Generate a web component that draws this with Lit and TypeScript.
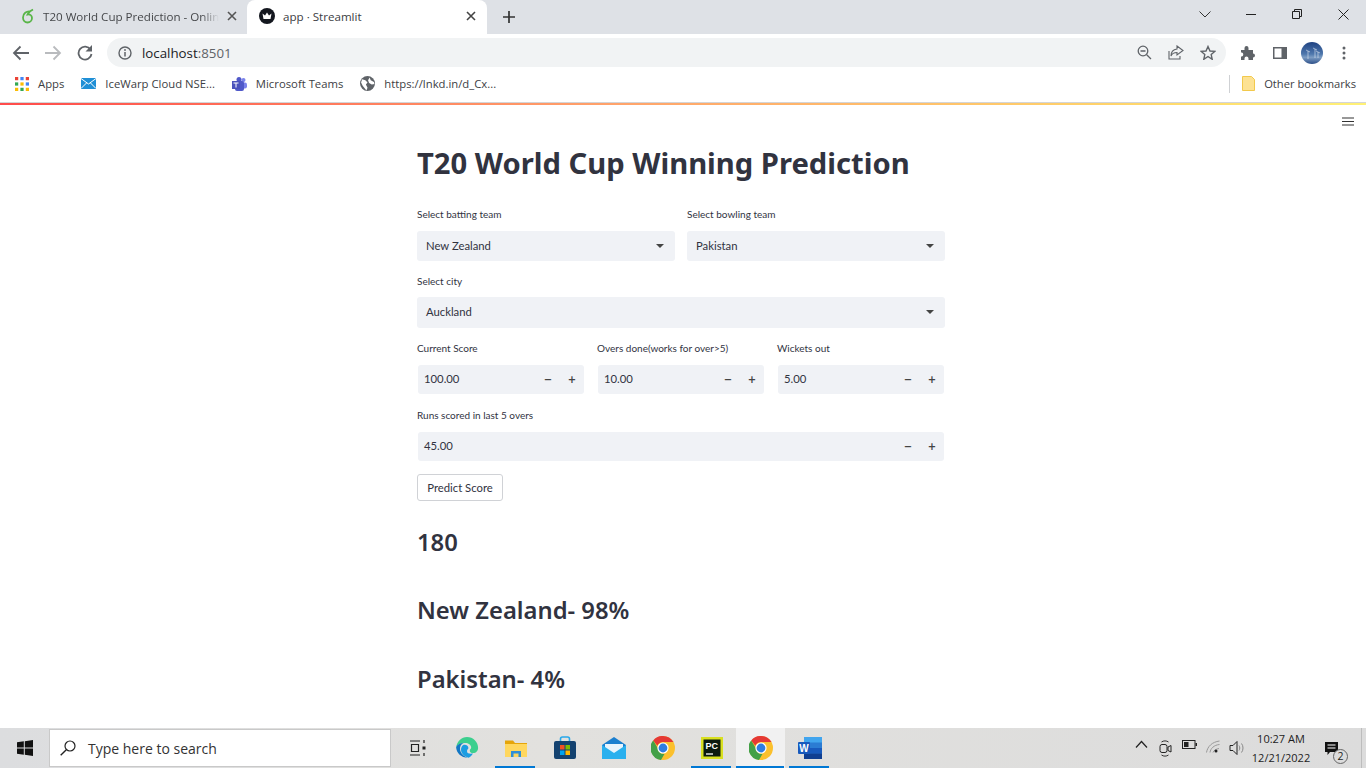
import { LitElement, html, css, svg } from 'lit';
import { customElement } from 'lit/decorators.js';

const icon = (w: number, h: number, body: unknown, vb = `0 0 ${w} ${h}`) =>
  html`<svg width=${w} height=${h} viewBox=${vb} fill="none">${body}</svg>`;

const chromeLogo = icon(24, 24, svg`
  <circle cx="12" cy="12" r="12" fill="#fbc02d"/>
  <path d="M12 0a12 12 0 0 1 10.4 6H12a6 6 0 0 0-5.6 3.8L2.2 4.4A12 12 0 0 1 12 0z" fill="#e53935"/>
  <path d="M2.2 4.4 7 12.6a5.5 5.5 0 0 0 6.6 5.2L10 24A12 12 0 0 1 2.2 4.4z" fill="#43a047"/>
  <circle cx="12" cy="12" r="5.6" fill="#fff"/>
  <circle cx="12" cy="12" r="4.4" fill="#2f7de1"/>`);

const slots = [
  { on: false, body: icon(16, 16, svg`
      <path d="M0 1h10M0 15h10M1.500 4.500h7v7h-7z" stroke="#222" stroke-width="1.200"/>
      <path d="M14 0v3M14 13v3" stroke="#222" stroke-width="1.200"/>
      <rect x="12.500" y="6.500" width="3" height="3" fill="#222"/>`) },
  { on: false, body: icon(24, 24, svg`
      <path d="M13 1a12 12 0 0 1 12 12c0 3-2 5.500-5.500 5.500-2 0-3.500-.8-3.500-2.500 0-1.500 1.500-2 1.500-3.500 0-3-3-5-6.500-5C6 7.500 2.500 9.500 1.300 12 2 6 7 1 13 1z" fill="#3ccf8e"/>
      <path d="M1.200 12C2.500 9 6 7.500 9.500 7.500c-3 1-4.500 4-4 7.500.6 4 4 7 8 8.500A12 12 0 0 1 1.200 12z" fill="#1277c4"/>
      <path d="M9.500 9.500c3-.5 5 1.500 5 3.500 0 1-1.500 1.500-1.500 3.500 0 2.500 3 3 6.500 2.500A12 12 0 0 1 15 23.500c-5-1-8.500-4.500-8.500-8.500 0-2.500 1-4.500 3-5.500z" fill="#1b9de2"/>`, '0 0 26 26') },
  { on: true, body: icon(22, 18, svg`
      <path d="M0 1.500h8l2 2.500h12v3H0z" fill="#e5a50a"/>
      <path d="M0 5h22v13H0z" fill="#ffd75e"/>
      <path d="M6 12h10v6h-2.500v-3.500h-5V18H6z" fill="#2f8fd8"/>`) },
  { on: false, body: icon(24, 24, svg`
      <path d="M7.500 6V3a2 2 0 0 1 2-2h5a2 2 0 0 1 2 2v3" stroke="#28a8ea" stroke-width="1.600"/>
      <rect x="1" y="5" width="22" height="18" rx="2" fill="#14426f"/>
      <rect x="7" y="9" width="4.500" height="4.500" fill="#f25022"/>
      <rect x="12.500" y="9" width="4.500" height="4.500" fill="#7fba00"/>
      <rect x="7" y="14.500" width="4.500" height="4.500" fill="#00a4ef"/>
      <rect x="12.500" y="14.500" width="4.500" height="4.500" fill="#ffb900"/>`) },
  { on: false, body: icon(24, 22, svg`
      <path d="M0 8 12 0l12 8v14H0z" fill="#1b7fcf"/>
      <path d="M3 7h18v6l-9 5-9-5z" fill="#e8f4fc"/>
      <path d="M0 8l12 8 12-8v14H0z" fill="#2ab0ee"/>`) },
  { on: false, body: chromeLogo },
  { on: true, body: icon(22, 22, svg`
      <rect width="22" height="22" fill="#d9e021"/>
      <rect x="2.500" y="2.500" width="17" height="17" fill="#0c1a10"/>
      <path d="M5 17h7" stroke="#fff" stroke-width="1.300"/>
      <text x="4.500" y="11.500" font-size="9" font-weight="700" font-family="Liberation Sans, sans-serif" fill="#fff">PC</text>`) },
  { on: true, active: true, body: chromeLogo },
  { on: true, body: icon(24, 22, svg`
      <rect x="6" y="0" width="18" height="22" fill="#2b7cd3"/>
      <rect x="6" y="0" width="18" height="5.500" fill="#41a5ee"/>
      <rect x="6" y="11" width="18" height="5.500" fill="#185abd"/>
      <rect x="6" y="16.500" width="18" height="5.500" fill="#103f91"/>
      <rect x="0" y="5" width="12" height="12" rx="1" fill="#185abd"/>
      <text x="1.200" y="14.500" font-size="10" font-weight="700" font-family="Liberation Sans, sans-serif" fill="#fff">W</text>`) },
];

@customElement('app-root')
export class AppRoot extends LitElement {
  static styles = css`
    :host {
      display: flex;
      flex-direction: column;
      width: 1366px;
      height: 768px;
      overflow: hidden;
      font-family: 'Open Sans', 'Noto Sans', sans-serif;
      background: #fff;
    }
    svg { display: block; flex: none; }

    /* tab strip */
    .tabs { display: flex; align-items: flex-end; height: 34px; background: #dee1e6; flex: none; }
    .tab { display: flex; align-items: center; height: 34px; padding-bottom: 2px; font-size: 11.600px; color: #45474a; box-sizing: border-box; white-space: nowrap; }
    .tab.back { width: 247px; padding-left: 19px; }
    .tab.front { width: 240px; padding-left: 12px; background: #fff; border-radius: 8px 8px 0 0; color: #3c4043; }
    .tab .name { width: 176px; margin-left: 8px; overflow: hidden; text-overflow: clip; -webkit-mask-image: linear-gradient(90deg, #000 90%, transparent); }
    .tab.front .name { width: 178px; -webkit-mask-image: none; }
    .tab .x { margin-left: 8px; }
    .tab.front .x { margin-left: 5px; }
    .plus { align-self: center; margin-left: 16px; }
    .win { margin-left: auto; align-self: flex-start; display: flex; align-items: center; height: 28px; }
    .win span { display: flex; justify-content: center; width: 46px; }

    /* toolbar */
    .bar { display: flex; align-items: center; height: 34px; flex: none; padding: 3px 0 0 12px; box-sizing: border-box; background: #fff; }
    .nav { width: 32px; display: flex; }
    .nav.reload { margin-left: 1px; }
    .url { display: flex; align-items: center; width: 1119px; height: 29px; margin-left: -2px; border-radius: 15px; background: #f1f3f4; box-sizing: border-box; padding-left: 11px; font-size: 13.300px; color: #202124; }
    .url .host { margin-left: 10px; }
    .url .port { color: #5f6368; }
    .url .tools { margin-left: auto; display: flex; gap: 16px; padding-right: 10px; align-items: center; }
    .ext { display: flex; align-items: center; margin-left: 6px; }
    .ext > span { display: flex; justify-content: center; width: 32px; }
    .avatar { position: relative; width: 22px; height: 22px; border-radius: 50%; overflow: hidden; background: linear-gradient(180deg, #1f4282, #4f78ad 55%, #7d9dc4 70%, #2c4f88); }

    /* bookmarks */
    .marks { display: flex; align-items: center; height: 35px; flex: none; padding: 0 10px 3px 15px; font-size: 11.300px; color: #3c4043; border-bottom: 1px solid #d3d5d8; box-sizing: border-box; white-space: nowrap; }
    .mark { display: flex; align-items: center; gap: 9px; margin-right: 17px; }
    .marks .rest { margin-left: auto; display: flex; align-items: center; gap: 9px; border-left: 1px solid #cfd1d4; padding-left: 12px; height: 18px; font-size: 11.200px; }
    .rainbow { height: 2px; flex: none; background: linear-gradient(90deg, #ff4b4b, #ffa36b 45%, #ffd16a 80%, #fff176); }

    /* page */
    .page { flex: 1; position: relative; color: #31333f; font-family: 'Lato', 'Open Sans', sans-serif; min-height: 0; }
    .menu { position: absolute; top: 12px; right: 12px; }
    .main { width: 528px; margin-left: 417px; }
    h1 { margin: 0; padding-top: 36px; height: 66px; font-family: 'Noto Sans', sans-serif; font-size: 29.200px; line-height: 44px; font-weight: 700; white-space: nowrap; }
    label { display: block; font-size: 10px; line-height: 14px; }
    .row { display: flex; gap: 12px; }
    .row > div { flex: 1; min-width: 0; }
    .select { display: flex; align-items: center; justify-content: space-between; height: 30px; margin-top: 10px; padding: 0 11px 1px 9px; box-sizing: border-box; background: #f0f2f6; border-radius: 3px; font-size: 11.300px; }
    .select.tall { height: 31px; margin-top: 9px; padding-bottom: 2px; }
    .caret { width: 0; height: 0; margin-top: 1px; border: 4px solid transparent; border-top: 4px solid #444; border-bottom: 0; }
    .number { display: flex; align-items: center; height: 29px; margin: 10px 1px 0; padding-left: 6px; background: #f0f2f6; border-radius: 3px; font-size: 11.300px; }
    .number span:first-child { flex: 1; margin-bottom: 2px; }
    .step { width: 24px; display: flex; justify-content: center; font-family: 'DejaVu Sans', sans-serif; font-weight: 700; font-size: 10px; color: #444; }
    .gap-a { margin-top: 13px; }
    .gap-b { margin-top: 14px; }
    button { display: block; margin-top: 13px; width: 86px; height: 27px; padding: 0; background: #fff; border: 1px solid #d0d2d6; border-radius: 3px; font: inherit; font-size: 11.300px; color: #31333f; }
    h2 { margin: 0; font-family: 'Noto Sans', sans-serif; font-size: 23.800px; line-height: 36px; font-weight: 600; white-space: nowrap; }
    .r1 { margin-top: 23px; }
    .r2 { margin-top: 32px; }
    .r3 { margin-top: 33px; }

    /* taskbar */
    .taskbar { display: flex; align-items: center; height: 40px; flex: none; background: linear-gradient(90deg, #dcdddf, #e2e1de 40%, #dcdcdc); font-family: 'Open Sans', sans-serif; color: #1c1c1c; }
    .start { display: flex; justify-content: center; width: 49px; }
    .search { display: flex; align-items: center; gap: 12px; width: 342px; height: 38px; box-sizing: border-box; padding-left: 10px; background: #fff; border: 1px solid #c9c9c9; font-size: 14px; color: #333; margin-right: 2px; }
    .slot { position: relative; display: flex; align-items: center; justify-content: center; width: 49px; height: 40px; box-sizing: border-box; }
    .slot.active { background: #f1f1f1; }
    .slot.on::after { content: ''; position: absolute; left: 4px; right: 5px; bottom: 0; height: 2px; background: #0078d4; }
    .slot.active.on::after { left: 0; right: 1px; }
    .tray { margin-left: auto; margin-right: 4px; display: flex; align-items: center; height: 40px; padding-right: 23px; border-right: 1px solid #bdbdbd; box-sizing: border-box; }
    .tray .g { display: flex; }
    .tray .g span { display: flex; justify-content: center; width: 24px; }
    .clock { width: 64px; text-align: center; font-size: 11px; line-height: 19px; white-space: nowrap; }
    .note { position: relative; margin-left: 12px; }
    .badge { position: absolute; left: 8px; top: 7px; width: 15px; height: 15px; box-sizing: border-box; border: 1px solid #666; border-radius: 50%; background: #dcdcdc; font-size: 10.500px; line-height: 13px; text-align: center; }
  `;

  number(value: string) {
    return html`<div class="number"><span>${value}</span><span class="step">−</span><span class="step">+</span></div>`;
  }

  render() {
    const x = (c: string) => icon(10, 10, svg`<path d="M1 1l8 8M9 1l-8 8" stroke=${c} stroke-width="1.600"/>`);
    return html`
      <div class="tabs">
        <div class="tab back">
          ${icon(16, 16, svg`<path d="M11 3.500C7.500 3 4 5.500 4 9.500c0 3 2 5 4.500 5S13 12.500 13 10s-2-4-4.500-3.500C9.500 4 11 3 14 1.500" stroke="#59b548" stroke-width="1.800"/>`)}
          <span class="name">T20 World Cup Prediction - Online</span>
          <span class="x">${x('#555')}</span>
        </div>
        <div class="tab front">
          ${icon(16, 16, svg`<circle cx="8" cy="8" r="8" fill="#14171f"/><path d="M3.500 5.500l2.500 2 2-3 2 3 2.500-2-1 5.500h-7z" fill="#fff"/>`)}
          <span class="name">app · Streamlit</span>
          <span class="x">${x('#444')}</span>
        </div>
        <span class="plus">${icon(12, 12, svg`<path d="M6 0v12M0 6h12" stroke="#333" stroke-width="1.700"/>`)}</span>
        <div class="win">
          <span>${icon(12, 7, svg`<path d="M.5.5 6 6 11.500.5" stroke="#333"/>`)}</span>
          <span>${icon(10, 1, svg`<path d="M0 .5h10" stroke="#222"/>`)}</span>
          <span>${icon(10, 10, svg`<path d="M.5 2.500h7v7h-7zM2.500 2.500v-2h7v7h-2" stroke="#222"/>`)}</span>
          <span>${icon(11, 11, svg`<path d="M.5.5l10 10M10.500.5l-10 10" stroke="#222"/>`)}</span>
        </div>
      </div>

      <div class="bar">
        <span class="nav">${icon(18, 16, svg`<path d="M17 8H2M8.500 1.500 2 8l6.500 6.500" stroke="#5f6368" stroke-width="1.800"/>`)}</span>
        <span class="nav">${icon(18, 16, svg`<path d="M1 8h15M9.500 1.500 16 8l-6.500 6.500" stroke="#b9bbbe" stroke-width="1.800"/>`)}</span>
        <span class="nav reload">${icon(16, 16, svg`<path d="M13.500 4.500A6.500 6.500 0 1 0 14.500 9" stroke="#5f6368" stroke-width="1.800"/><path d="M15 0v6.500H8.500z" fill="#5f6368"/>`)}</span>
        <div class="url">
          ${icon(14, 14, svg`<circle cx="7" cy="7" r="6" stroke="#5f6368" stroke-width="1.400"/><path d="M7 6v4.500" stroke="#5f6368" stroke-width="1.500"/><circle cx="7" cy="4" r=".9" fill="#5f6368"/>`)}
          <span class="host">localhost<span class="port">:8501</span></span>
          <div class="tools">
            ${icon(15, 15, svg`<circle cx="6" cy="6" r="4.800" stroke="#5f6368" stroke-width="1.300"/><path d="M3.500 6h5M9.700 9.700 14 14" stroke="#5f6368" stroke-width="1.300"/>`)}
            ${icon(16, 15, svg`<path d="M9 1l6 4.500L9 10V7.500C6 7.500 4 8.500 3 11c0-4 2-6.500 6-7z" stroke="#5f6368" stroke-width="1.100"/><path d="M1 6v8h11v-3" stroke="#5f6368" stroke-width="1.100"/>`)}
            ${icon(16, 15, svg`<path d="M8 1.500l2 4.500 4.800.4-3.600 3.200 1 4.700L8 11.500l-4.200 2.800 1-4.700L1.200 6.400 6 6z" stroke="#5f6368" stroke-width="1.400"/>`)}
          </div>
        </div>
        <div class="ext">
          <span>${icon(16, 15, svg`<path d="M1 5h3.500V3a2 2 0 0 1 4 0v2H13v3.500a2 2 0 0 1 0 4V15H8.500v-1.500a2 2 0 0 0-4 0V15H1v-3.500h1a2.200 2.200 0 0 0 0-4H1z" fill="#5f6368"/>`)}</span>
          <span>${icon(14, 12, svg`<rect width="14" height="12" fill="#5f6368"/><rect x="1.500" y="1.500" width="7" height="9" fill="#fff"/>`)}</span>
          <span><div class="avatar">${icon(22, 22, svg`<path d="M7 9v8M14 7v9M17 10v6M5 8l4 2M12 6l4 2M15 9l4 2" stroke="#dfe8f2" stroke-width=".6"/>`)}</div></span>
          <span>${icon(4, 14, svg`<circle cx="2" cy="2" r="1.500" fill="#5f6368"/><circle cx="2" cy="7" r="1.500" fill="#5f6368"/><circle cx="2" cy="12" r="1.500" fill="#5f6368"/>`)}</span>
        </div>
      </div>

      <div class="marks">
        <div class="mark">
          ${icon(14, 14, svg`
            <rect width="3" height="3" fill="#ea4335"/><rect x="5" width="3" height="3" fill="#4285f4"/><rect x="10" width="3" height="3" fill="#ea4335"/>
            <rect y="5" width="3" height="3" fill="#34a853"/><rect x="5" y="5" width="3" height="3" fill="#fbbc05"/><rect x="10" y="5" width="3" height="3" fill="#4285f4"/>
            <rect y="10" width="3" height="3" fill="#fbbc05"/><rect x="5" y="10" width="3" height="3" fill="#34a853"/><rect x="10" y="10" width="3" height="3" fill="#fbbc05"/>`, '0 0 13 13')}
          <span>Apps</span>
        </div>
        <div class="mark">
          ${icon(15, 11, svg`<rect width="15" height="11" fill="#1f8fd6"/><path d="M0 .5l7.500 5.500L15 .5M0 10.500l5.500-5.500M15 10.500 9.500 5" stroke="#fff"/>`)}
          <span>IceWarp Cloud NSE...</span>
        </div>
        <div class="mark">
          ${icon(15, 14, svg`<circle cx="11.500" cy="3" r="2" fill="#7b83eb"/><rect x="9" y="5.500" width="6" height="6" rx="2" fill="#7b83eb"/><circle cx="7" cy="2.500" r="2.500" fill="#5059c9"/><rect x="3" y="4" width="9" height="10" rx="2" fill="#5059c9"/><rect y="4" width="8" height="8" fill="#4b53bc"/><path d="M1.500 6h5M4 6v4.500" stroke="#fff"/>`)}
          <span>Microsoft Teams</span>
        </div>
        <div class="mark">
          ${icon(15, 15, svg`<circle cx="7" cy="7" r="7" fill="#5f6368"/><path d="M2 3l3 1 2 2-1.500 2L7 11l-1 2.500L2.500 9 1 6zM9 1.500l1 2.500 3 1.500.5 2-2.500.500-2.500-1.500-1-2.500z" fill="#fff"/>`, '0 0 14 14')}
          <span>https://lnkd.in/d_Cx...</span>
        </div>
        <div class="rest">
          ${icon(13, 15, svg`<path d="M.5.500h9l3 3v11H.5z" fill="#fde293" stroke="#f2c94c"/>`)}
          <span>Other bookmarks</span>
        </div>
      </div>
      <div class="rainbow"></div>

      <div class="page">
        <span class="menu">${icon(12, 9, svg`<path d="M0 1h12M0 4.500h12M0 8h12" stroke="#333" stroke-width="1.200"/>`)}</span>
        <div class="main">
          <h1>T20 World Cup Winning Prediction</h1>
          <div class="row">
            <div><label>Select batting team</label><div class="select">New Zealand<span class="caret"></span></div></div>
            <div><label>Select bowling team</label><div class="select">Pakistan<span class="caret"></span></div></div>
          </div>
          <div class="gap-a"><label>Select city</label><div class="select tall">Auckland<span class="caret"></span></div></div>
          <div class="row gap-a">
            <div><label>Current Score</label>${this.number('100.00')}</div>
            <div><label>Overs done(works for over&gt;5)</label>${this.number('10.00')}</div>
            <div><label>Wickets out</label>${this.number('5.00')}</div>
          </div>
          <div class="gap-b"><label>Runs scored in last 5 overs</label>${this.number('45.00')}</div>
          <button>Predict Score</button>
          <h2 class="r1">180</h2>
          <h2 class="r2">New Zealand- 98%</h2>
          <h2 class="r3">Pakistan- 4%</h2>
        </div>
      </div>

      <div class="taskbar">
        <div class="start">${icon(16, 16, svg`<path d="M0 2.300 6.800 1.300v6.300H0zM7.800 1.200 16 0v7.600H7.800zM0 8.500h6.800v6.300L0 13.800zM7.800 8.500H16V16l-8.200-1.200z" fill="#111"/>`)}</div>
        <div class="search">
          ${icon(16, 16, svg`<circle cx="10" cy="6" r="5" stroke="#222" stroke-width="1.200"/><path d="M6.300 9.700.7 15.300" stroke="#222" stroke-width="1.400"/>`)}
          <span>Type here to search</span>
        </div>
        ${slots.map(s => html`<div class="slot ${s.on ? 'on' : ''} ${s.active ? 'active' : ''}">${s.body}</div>`)}
        <div class="tray">
          <div class="g">
            <span>${icon(13, 8, svg`<path d="M1 7.500 6.500 1.500l5.500 6" stroke="#222" stroke-width="1.200"/>`)}</span>
            <span>${icon(13, 17, svg`<path d="M2.500 2c2-1.500 5-1.500 7 0M2.500 15c2 1.500 5 1.500 7 0" stroke="#333"/><rect x="1" y="4.500" width="7" height="8" rx="2" stroke="#222"/><path d="M9 7l3-1.500v6.500L9 10.500z" stroke="#222"/>`)}</span>
            <span>${icon(15, 9, svg`<rect x=".5" y=".5" width="12.500" height="8" stroke="#222"/><rect x="2" y="2" width="4.500" height="5" fill="#222"/><rect x="13.500" y="3" width="1.500" height="3" fill="#222"/>`)}</span>
            <span>${icon(14, 13, svg`<path d="M.5 12.500C1.500 6.500 6 2 13.500 1M4 12.500C4.500 8.500 8 5 13.500 4.500M7 12.500c.5-2 3-3.500 6-4" stroke="#999"/><circle cx="10" cy="11" r="1.500" fill="#222"/>`)}</span>
            <span>${icon(16, 16, svg`<path d="M1 5.500h3L8 1.500v13l-4-4H1z" stroke="#222"/><path d="M10 5.500c1 1.500 1 3.500 0 5M12.500 3.500c2 2.500 2 6.500 0 9" stroke="#888"/>`)}</span>
          </div>
          <div class="clock">10:27 AM<br />12/21/2022</div>
          <div class="note">
            ${icon(13, 13, svg`<path d="M0 0h13v10H5l-2.500 3v-3H0z" fill="#111"/><path d="M2.500 3h8M2.500 6h8" stroke="#fff"/>`)}
            <span class="badge">2</span>
          </div>
        </div>
      </div>
    `;
  }
}
